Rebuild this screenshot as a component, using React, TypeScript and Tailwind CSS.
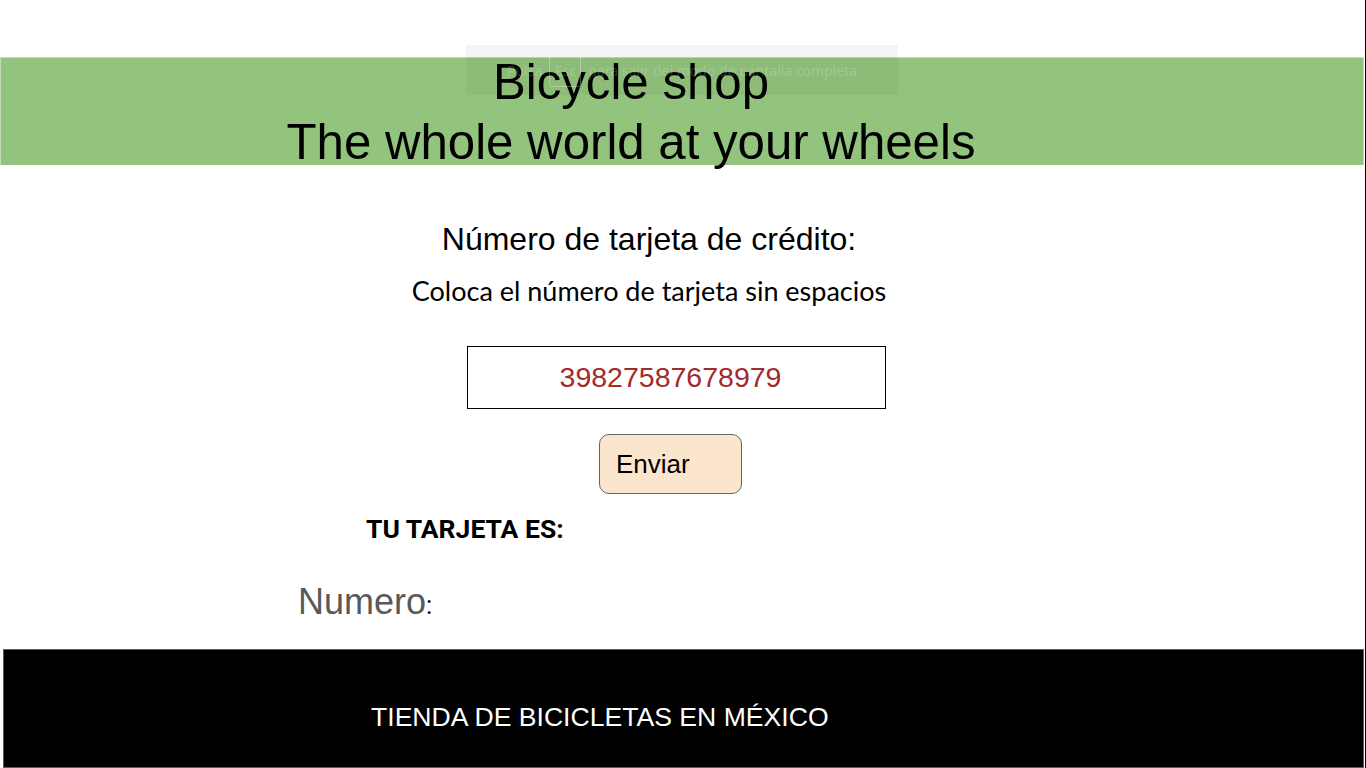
import React from "react";

const arial = "font-['Liberation_Sans',Arial,sans-serif]";

export default function App() {
  return (
    <div className="relative w-[1366px] h-[768px] overflow-hidden bg-white border-r border-black flex flex-col">
      <div className="h-[57px] shrink-0" />

      <header className="w-[1364px] h-[108px] shrink-0 bg-[#93c47d] border-t border-l border-r border-[#c3dbb8] flex items-center justify-center pr-[102px]">
        <h1 className={`${arial} text-[49.2px] leading-[60px] text-center text-black whitespace-nowrap`}>
          Bicycle shop
          <br />
          The whole world at your wheels
        </h1>
      </header>

      <main className="flex-1 flex flex-col">
        <h2 className={`${arial} mt-[56px] pr-[67px] text-center text-[32px] leading-[36px] text-black`}>
          Número de tarjeta de crédito:
        </h2>
        <p className="mt-[19px] pr-[67px] text-center font-['Lato','Noto_Sans',sans-serif] text-[27px] leading-[30px] text-black">
          Coloca el número de tarjeta sin espacios
        </p>

        <div className="mt-[40px] pl-[467px]">
          <input
            type="text"
            defaultValue="39827587678979"
            className={`${arial} w-[419px] h-[63px] border border-black bg-white pr-[12px] text-center text-[28.5px] text-[#a52a2a] outline-none`}
          />
        </div>

        <div className="mt-[25px] pl-[599px]">
          <button
            type="button"
            className={`${arial} w-[143px] h-[60px] flex items-center pl-[16px] rounded-[10px] border border-[#666] bg-[#fce5cd] text-[26px] text-black`}
          >
            Enviar
          </button>
        </div>

        <p className="mt-[20px] pl-[366px] font-['Roboto',sans-serif] font-bold text-[26.5px] leading-[30px] text-black">
          TU TARJETA ES:
        </p>

        <p className="mt-[38px] pl-[298px] leading-[40px]">
          <span className={`${arial} text-[36px] text-[#595959]`}>Numero</span>
          <span className="font-['Roboto',sans-serif] text-[26px] text-black">:</span>
        </p>
      </main>

      <footer className="ml-[3px] w-[1361px] h-[119px] shrink-0 bg-black border border-[#5c5c5c] pt-[52px] pl-[367px]">
        <p className={`${arial} text-[26.6px] leading-[30px] text-white`}>TIENDA DE BICICLETAS EN MÉXICO</p>
      </footer>

      {/* aviso de pantalla completa */}
      <div className="absolute left-[466px] top-[45px] w-[432px] h-[50px] bg-black/[0.04] flex items-center pl-[41px] gap-[7px] font-['Noto_Sans',sans-serif] text-[14px] text-white/20 whitespace-nowrap">
        <span>Pulsa</span>
        <span className="h-[34px] w-[32px] flex items-center justify-center rounded-[3px] border border-white/30">Esc</span>
        <span>para salir del modo de pantalla completa</span>
      </div>
    </div>
  );
}
